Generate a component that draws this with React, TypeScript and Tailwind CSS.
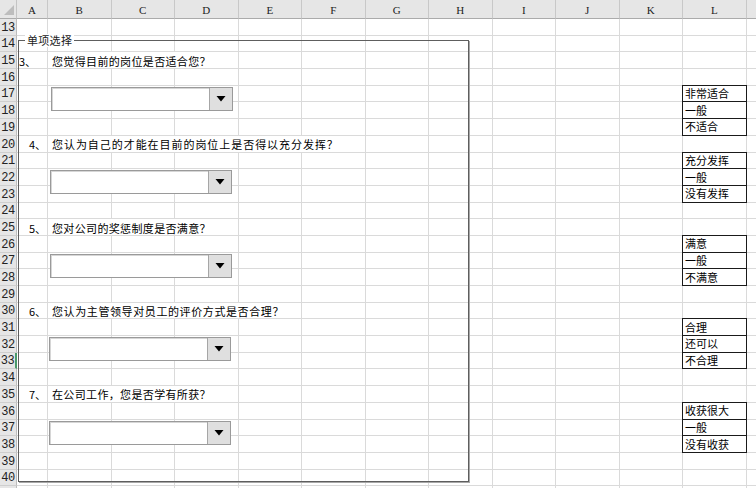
import React from 'react';

const COLS = ['A', 'B', 'C', 'D', 'E', 'F', 'G', 'H', 'I', 'J', 'K', 'L'];
const ROWS = Array.from({ length: 29 }, (_, i) => 13 + i);

type Q = { num: string; left?: boolean; text: string; span: 3 | 4 | 5; track: string };
const QUESTIONS: Record<number, Q> = {
  15: { num: '3、', left: true, text: '您觉得目前的岗位是否适合您？', span: 3, track: 'tracking-[0.35px]' },
  20: { num: '4、', text: '您认为自己的才能在目前的岗位上是否得以充分发挥？', span: 5, track: 'tracking-[0.95px]' },
  25: { num: '5、', text: '您对公司的奖惩制度是否满意？', span: 3, track: 'tracking-[0.35px]' },
  30: { num: '6、', text: '您认为主管领导对员工的评价方式是否合理？', span: 4, track: 'tracking-[0.6px]' },
  35: { num: '7、', text: '在公司工作，您是否学有所获？', span: 3, track: 'tracking-[0.35px]' },
};

const SPAN: Record<number, string> = { 3: 'col-span-3', 4: 'col-span-4', 5: 'col-span-5' };

const OPTIONS: Record<number, string> = {
  17: '非常适合', 18: '一般', 19: '不适合',
  21: '充分发挥', 22: '一般', 23: '没有发挥',
  26: '满意', 27: '一般', 28: '不满意',
  31: '合理', 32: '还可以', 33: '不合理',
  36: '收获很大', 37: '一般', 38: '没有收获',
};
const FIRST = new Set([17, 21, 26, 31, 36]);

const COMBOS = [
  { left: 'left-[51px]', top: 'top-[87px]' },
  { left: 'left-[50px]', top: 'top-[170px]' },
  { left: 'left-[50px]', top: 'top-[254px]' },
  { left: 'left-[49px]', top: 'top-[337px]' },
  { left: 'left-[49px]', top: 'top-[421px]' },
];

const cjk = "font-['Noto_Sans_CJK_SC',_'Noto_Sans',_sans-serif]";
const cell = 'border-r border-b border-[#dadada]';

function Combo({ left, top }: { left: string; top: string }) {
  return (
    <div className={`absolute ${left} ${top} flex h-[24px] w-[182px] border border-[#9a9a9a] bg-white shadow-[inset_1px_1px_0_#d6d6d6]`}>
      <div className="ml-auto flex h-full w-[23px] items-center justify-center border-l border-[#a6a6a6] bg-[#dfdfdf]">
        <svg width="10" height="6" viewBox="0 0 10 6">
          <polygon points="0.5,0 9.5,0 5,5.5" fill="#000" />
        </svg>
      </div>
    </div>
  );
}

export default function App() {
  return (
    <div className="relative h-[488px] w-[756px] overflow-hidden bg-white text-black">
      <div className="grid grid-cols-[17px_31px_repeat(11,63.5px)_1fr] grid-rows-[19px_repeat(29,16.7px)]">
        {/* header row */}
        <div className="relative border-r border-b border-[#c4c4c4] border-b-[#ababab] bg-[#e6e6e6]">
          <svg className="absolute left-0 top-0" width="17" height="19" viewBox="0 0 17 19">
            <polygon points="14,5 14,15 4,15" fill="#bdbdbd" />
          </svg>
        </div>
        {COLS.map((c) => (
          <div
            key={c}
            className="flex items-end justify-center border-r border-b border-[#c8c8c8] border-b-[#ababab] bg-[#e6e6e6] pb-[1px] font-['Liberation_Serif',_serif] text-[11px] leading-[13px] text-[#222]"
          >
            {c}
          </div>
        ))}
        <div className="border-b border-[#ababab] bg-[#e6e6e6]" />

        {ROWS.map((r) => {
          const q = QUESTIONS[r];
          const opt = OPTIONS[r];
          const cells: React.ReactNode[] = [];
          cells.push(
            <div
              key="h"
              className={`flex items-end justify-center overflow-hidden border-b border-[#cfcfcf] bg-[#e6e6e6] font-['Liberation_Mono',_monospace] text-[12px] leading-[13px] tracking-[-0.5px] text-[#222] ${
                r === 33 ? 'border-r-2 border-r-[#4a9a6a]' : 'border-r border-r-[#bcbcbc]'
              }`}
            >
              {r <= 40 ? r : ''}
            </div>
          );
          if (q) {
            cells.push(
              <div
                key="a"
                className={`flex items-center pt-[2px] ${cell} ${cjk} whitespace-nowrap text-[11px] leading-none ${
                  q.left ? 'justify-start pl-[2px]' : 'justify-end pr-[1px]'
                }`}
              >
                {q.num}
              </div>
            );
            cells.push(
              <div
                key="b"
                className={`${SPAN[q.span]} flex items-center pt-[2px] ${cell} ${cjk} ${q.track} whitespace-nowrap pl-[4px] text-[11px] leading-none`}
              >
                {q.text}
              </div>
            );
            for (let i = 1 + q.span; i < COLS.length; i++) {
              cells.push(<div key={COLS[i]} className={cell} />);
            }
          } else {
            for (let i = 0; i < COLS.length; i++) {
              if (COLS[i] === 'L' && opt) {
                cells.push(
                  <div
                    key="L"
                    className={`flex items-center border-r border-b border-[#1a1a1a] pl-[2px] ${cjk} whitespace-nowrap text-[11px] leading-none ${
                      FIRST.has(r) ? 'shadow-[-1px_0_0_#1a1a1a,0_-1px_0_#1a1a1a,-1px_-1px_0_#1a1a1a]' : 'shadow-[-1px_0_0_#1a1a1a]'
                    }`}
                  >
                    {opt}
                  </div>
                );
              } else {
                cells.push(<div key={COLS[i]} className={cell} />);
              }
            }
          }
          cells.push(<div key="f" className="border-b border-[#dadada]" />);
          return <React.Fragment key={r}>{cells}</React.Fragment>;
        })}
      </div>

      {/* group box */}
      <div className="absolute left-[18px] top-[40px] h-[442px] w-[451px] border border-[#5e5e5e] shadow-[1px_1px_0_#a8a8a8]">
        <div className={`absolute left-[6px] top-[-7px] bg-white px-[2px] ${cjk} tracking-[0.3px] text-[11px] leading-[13px] text-[#222]`}>
          单项选择
        </div>
      </div>

      {COMBOS.map((c, i) => (
        <Combo key={i} left={c.left} top={c.top} />
      ))}
    </div>
  );
}
